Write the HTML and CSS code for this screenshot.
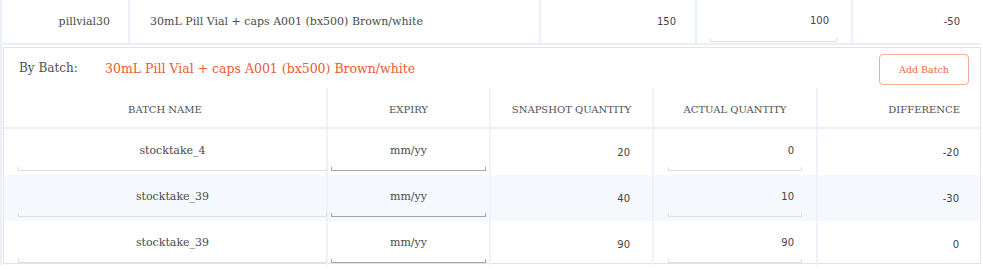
FILE: index.html
```html
<!DOCTYPE html>
<html>
<head>
<meta charset="utf-8">
<link rel="stylesheet" href="styles.css">
</head>
<body>
<div class="sheet">
  <div class="product-row">
    <div class="cell sku">pillvial30</div>
    <div class="cell desc">30mL Pill Vial + caps A001 (bx500) Brown/white</div>
    <div class="cell num">150</div>
    <div class="cell field-cell">
      <div class="field num-field"><span class="val">100</span><div class="rule light"></div></div>
    </div>
    <div class="cell num last">-50</div>
  </div>
  <div class="panel">
    <div class="panel-head">
      <span class="by">By Batch:</span>
      <span class="title">30mL Pill Vial + caps A001 (bx500) Brown/white</span>
      <button class="add">Add Batch</button>
    </div>
    <div class="batch-table">
      <div class="brow head">
        <div class="bc">BATCH NAME</div>
        <div class="bc">EXPIRY</div>
        <div class="bc">SNAPSHOT QUANTITY</div>
        <div class="bc">ACTUAL QUANTITY</div>
        <div class="bc right">DIFFERENCE</div>
      </div>
      <div class="brow">
        <div class="bc name"><div class="field"><span class="val">stocktake_4</span><div class="rule light"></div></div></div>
        <div class="bc exp"><div class="field"><span class="val">mm/yy</span><div class="rule dark"></div></div></div>
        <div class="bc n">20</div>
        <div class="bc act"><div class="field num-field"><span class="val">0</span><div class="rule light"></div></div></div>
        <div class="bc n">-20</div>
      </div>
      <div class="brow alt">
        <div class="bc name"><div class="field"><span class="val">stocktake_39</span><div class="rule light"></div></div></div>
        <div class="bc exp"><div class="field"><span class="val">mm/yy</span><div class="rule dark"></div></div></div>
        <div class="bc n">40</div>
        <div class="bc act"><div class="field num-field"><span class="val">10</span><div class="rule light"></div></div></div>
        <div class="bc n">-30</div>
      </div>
      <div class="brow">
        <div class="bc name"><div class="field"><span class="val">stocktake_39</span><div class="rule light"></div></div></div>
        <div class="bc exp"><div class="field"><span class="val">mm/yy</span><div class="rule dark"></div></div></div>
        <div class="bc n">90</div>
        <div class="bc act"><div class="field num-field"><span class="val">90</span><div class="rule light"></div></div></div>
        <div class="bc n">0</div>
      </div>
    </div>
  </div>
</div>
</body>
</html>
```
FILE: styles.css
```css
* { box-sizing: border-box; }
body {
  margin: 0;
  background: #fff;
  font-family: "DejaVu Serif", serif;
  color: #4a4a4a;
}
.sheet {
  width: 983px;
  height: 265px;
  border-left: 2px solid #e9f0fa;
  padding-right: 2px;
}
.product-row {
  display: grid;
  grid-template-columns: 128px 411px 156px 156px 126px;
  height: 45px;
  border-bottom: 2px solid #e9f0fa;
}
.product-row .cell {
  display: flex;
  align-items: center;
  font-size: 11px;
  border-right: 2px solid #e9f0fa;
  padding-bottom: 2px;
}
.product-row .cell.last { border-right: none; }
.sku { justify-content: flex-end; padding-right: 18px; }
.desc { padding-left: 20px; }
.num {
  justify-content: flex-end;
  padding-right: 19px;
  font-family: "DejaVu Sans", sans-serif;
  font-size: 10px !important;
  color: #444;
}
.field-cell { padding: 0 14px 0 13px; align-items: flex-start !important; }
.field { display: flex; flex-direction: column; width: 100%; }
.val { display: block; text-align: center; font-size: 11px; line-height: 14px; }
.num-field .val {
  text-align: right;
  padding-right: 8px;
  font-family: "DejaVu Sans", sans-serif;
  font-size: 10px;
  color: #444;
}
.product-row .num-field { margin-top: 14px; }
.product-row .num-field .rule { margin-top: 10px; }
.rule {
  height: 4px;
  border: 1px solid #ddd;
  border-top: none;
}
.rule.light { border-color: #dcdfe3; }
.rule.dark { border-color: #a5a5a5; }

.panel {
  margin-top: 2px;
  margin-left: 1px;
  border: 1px solid #e3e3e3;
  height: 217px;
}
.panel-head {
  display: flex;
  align-items: center;
  height: 40px;
  padding-left: 15px;
  padding-right: 11px;
}
.by { font-size: 12px; color: #505050; width: 86px; }
.title { font-size: 12.5px; color: #ec5b2f; flex: 1; }
.add {
  width: 90px;
  height: 31px;
  margin-top: 2px;
  background: #fff;
  border: 1px solid #f3ad94;
  border-radius: 4px;
  color: #ec6a43;
  font-family: "DejaVu Serif", serif;
  font-size: 9.5px;
  padding: 0;
}
.brow {
  display: grid;
  grid-template-columns: 324px 163px 163px 164px 1fr;
  height: 46px;
}
.brow.head { height: 41px; border-bottom: 2px solid #e9f0fa; }
.brow.alt { background: #f5f9fd; }
.bc {
  display: flex;
  align-items: center;
  justify-content: center;
  border-right: 2px solid #edf2fb;
  font-size: 10px;
}
.bc:last-child { border-right: none; }
.head .bc { font-size: 10px; padding-top: 3px; color: #505050; }
.head .bc.right { justify-content: flex-end; padding-right: 20px; }
.bc.n {
  justify-content: flex-end;
  padding-right: 22px;
  font-family: "DejaVu Sans", sans-serif;
  font-size: 10px;
  color: #444;
}
.bc:last-child.n { padding-right: 21px; }
.bc.name { padding: 0 0 0 13px; align-items: flex-start; }
.bc.name .field { margin-right: -2px; }
.bc.exp { padding: 0 3px 0 3px; align-items: flex-start; }
.bc.act { padding: 0 14px 0 14px; align-items: flex-start; }
.brow .field { margin-top: 15px; }
.brow .rule { margin-top: 9px; }
.brow .num-field .val { padding-right: 8px; }
```
